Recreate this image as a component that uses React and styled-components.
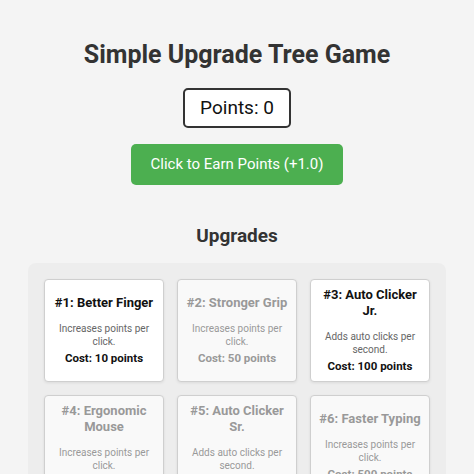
import styled, { createGlobalStyle } from 'styled-components'

const GlobalStyle = createGlobalStyle`
  html, body {
    margin: 0;
    padding: 0;
    background: #f4f4f4;
  }
  body {
    font-family: Roboto, "Liberation Sans", sans-serif;
    color: #333;
  }
`

const Page = styled.div`
  display: flex;
  flex-direction: column;
  align-items: center;
  padding-top: 40px;
`

const Title = styled.h1`
  margin: 0 0 19px;
  font-size: 25px;
  line-height: 29px;
  font-weight: 700;
  color: #333;
`

const PointsBox = styled.div`
  padding: 6px 15px;
  font-size: 19px;
  line-height: 24px;
  color: #111;
  background: #fff;
  border: 2px solid #333;
  border-radius: 5px;
`

const EarnButton = styled.button`
  margin-top: 16px;
  padding: 11px 20px;
  font-family: inherit;
  font-size: 15px;
  line-height: 19px;
  color: #fff;
  background: #4caf50;
  border: none;
  border-radius: 5px;
  cursor: pointer;
`

const Heading = styled.h2`
  margin: 39px 0 15px;
  font-size: 19px;
  line-height: 24px;
  font-weight: 700;
  color: #333;
`

const Grid = styled.div`
  display: grid;
  grid-template-columns: repeat(3, 120px);
  gap: 13px;
  padding: 16px;
  background: #ededed;
  border-radius: 8px;
`

const Card = styled.div`
  display: flex;
  flex-direction: column;
  justify-content: center;
  padding: 7px 8px 8px;
  text-align: center;
  background: ${({ $locked }) => ($locked ? '#f9f9f9' : '#fff')};
  border: 1px solid #cfcfcf;
  border-radius: 4px;
  box-shadow: 0 1px 3px rgba(0, 0, 0, 0.08);
  color: ${({ $locked }) => ($locked ? '#999' : '#111')};
`

const CardTitle = styled.h3`
  margin: 0 0 12px;
  font-size: 13px;
  line-height: 16px;
  font-weight: 700;
`

const Desc = styled.p`
  margin: 0 0 3px;
  font-size: 10px;
  line-height: 12.5px;
  color: ${({ $locked }) => ($locked ? '#999' : '#666')};
`

const Cost = styled.p`
  margin: 0;
  font-size: 11.5px;
  line-height: 14px;
  font-weight: 700;
`

const upgrades = [
  { id: 1, name: 'Better Finger', desc: 'Increases points per click.', cost: 10, locked: false },
  { id: 2, name: 'Stronger Grip', desc: 'Increases points per click.', cost: 50, locked: true },
  { id: 3, name: 'Auto Clicker Jr.', desc: 'Adds auto clicks per second.', cost: 100, locked: false },
  { id: 4, name: 'Ergonomic Mouse', desc: 'Increases points per click.', cost: 250, locked: true },
  { id: 5, name: 'Auto Clicker Sr.', desc: 'Adds auto clicks per second.', cost: 300, locked: true },
  { id: 6, name: 'Faster Typing', desc: 'Increases points per click.', cost: 500, locked: true },
]

export default function App() {
  return (
    <>
      <GlobalStyle />
      <Page>
        <Title>Simple Upgrade Tree Game</Title>
        <PointsBox>Points: 0</PointsBox>
        <EarnButton>Click to Earn Points (+1.0)</EarnButton>
        <Heading>Upgrades</Heading>
        <Grid>
          {upgrades.map((u) => (
            <Card key={u.id} $locked={u.locked}>
              <CardTitle>#{u.id}: {u.name}</CardTitle>
              <Desc $locked={u.locked}>{u.desc}</Desc>
              <Cost>Cost: {u.cost} points</Cost>
            </Card>
          ))}
        </Grid>
      </Page>
    </>
  )
}
